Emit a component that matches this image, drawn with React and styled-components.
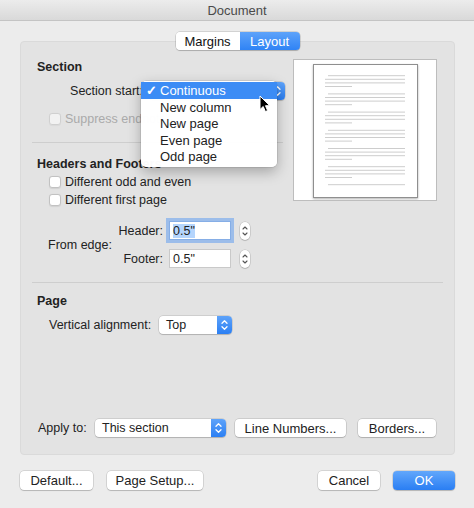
import React from 'react'
import styled, { createGlobalStyle } from 'styled-components'

const GlobalStyle = createGlobalStyle`
html, body {
    margin:0;
    padding:0;
}
body {
    width:474px;
    height:508px;
    overflow:hidden;
    background:#ececec;
    font-family:"Liberation Sans", Arial, sans-serif;
    font-size:12.5px;
    color:#222;
}
`

const sectionStarts = ['Continuous', 'New column', 'New page', 'Even page', 'Odd page']

function Chevrons({ color }) {
    return (
        <svg width="15" height="18" viewBox="0 0 15 18">
            <path d="M5 7.2 L7.5 4.7 L10 7.2" fill="none" stroke={color} strokeWidth="1.3" strokeLinecap="round" strokeLinejoin="round" />
            <path d="M5 10.8 L7.5 13.3 L10 10.8" fill="none" stroke={color} strokeWidth="1.3" strokeLinecap="round" strokeLinejoin="round" />
        </svg>
    )
}

function PopUp({ value, width, children }) {
    return (
        <PopWrap $width={width}>
            <PopText>{value}</PopText>
            <PopCap><Chevrons color="#fff" /></PopCap>
            {children}
        </PopWrap>
    )
}

function Stepper() {
    return (
        <StepBox>
            <svg width="10" height="18" viewBox="0 0 10 18">
                <path d="M3 7 L5 5 L7 7" fill="none" stroke="#555" strokeWidth="1.1" strokeLinecap="round" strokeLinejoin="round" />
                <path d="M3 11 L5 13 L7 11" fill="none" stroke="#555" strokeWidth="1.1" strokeLinecap="round" strokeLinejoin="round" />
            </svg>
        </StepBox>
    )
}

function PagePreview() {
    const groups = [0, 1, 2, 3, 4, 5]
    return (
        <Preview>
            <svg width="142" height="140" viewBox="0 0 142 140">
                <defs>
                    <filter id="pageShadow" x="-10%" y="-10%" width="120%" height="120%">
                        <feDropShadow dx="0" dy="1" stdDeviation="1" floodColor="#000" floodOpacity="0.3" />
                    </filter>
                </defs>
                <rect x="19.5" y="4.5" width="104" height="133" fill="#fff" stroke="#8f8f8f" filter="url(#pageShadow)" />
                {groups.map(g => {
                    const y = 15.7 + g * 18.2
                    return (
                        <g key={g} stroke="#cdcdcd" strokeWidth="1">
                            <line x1="34" y1={y} x2="111" y2={y} />
                            <line x1="31" y1={y + 3.6} x2="111" y2={y + 3.6} />
                            <line x1="31" y1={y + 7.2} x2="111" y2={y + 7.2} />
                            <line x1="31" y1={y + 10.8} x2="58" y2={y + 10.8} />
                        </g>
                    )
                })}
                <line x1="34" y1="124.7" x2="111" y2="124.7" stroke="#cdcdcd" strokeWidth="1" />
            </svg>
        </Preview>
    )
}

function App() {
    return (
        <Window>
            <GlobalStyle />
            <TitleBar>Document</TitleBar>
            <Body>
                <Tabs>
                    <Tab $width={64}>Margins</Tab>
                    <Tab $width={60} $active>Layout</Tab>
                </Tabs>
                <Panel>
                    <TopArea>
                        <LeftCol>
                            <Heading>Section</Heading>
                            <Row $top={7}>
                                <RightLabel $width={111}>Section start:</RightLabel>
                                <Gap $w={7} />
                                <PopUp value="Continuous" width={135}>
                                    <Menu>
                                        {sectionStarts.map((s, i) => (
                                            <MenuItem key={s} $active={i === 0}>
                                                {i === 0 && <Check>✓</Check>}
                                                {s}
                                            </MenuItem>
                                        ))}
                                    </Menu>
                                    <Cursor>
                                        <svg width="12" height="18" viewBox="0 0 12 18">
                                            <path d="M1 1 L1 14.5 L4.2 11.5 L6.4 16.6 L8.6 15.6 L6.5 10.7 L10.8 10.7 Z" fill="#000" stroke="#fff" strokeWidth="1" strokeLinejoin="round" />
                                        </svg>
                                    </Cursor>
                                </PopUp>
                            </Row>
                            <Row $top={10} $indent={17} $disabled>
                                <CheckBox $disabled />
                                <Gap $w={4} />
                                Suppress endnotes
                            </Row>
                            <Separator $top={14} />
                            <Heading $top={13}>Headers and Footers</Heading>
                            <Row $top={2} $h={16} $indent={17}>
                                <CheckBox />
                                <Gap $w={4} />
                                Different odd and even
                            </Row>
                            <Row $top={2} $h={16} $indent={17}>
                                <CheckBox />
                                <Gap $w={4} />
                                Different first page
                            </Row>
                            <FromEdge>
                                <EdgeLabel>From edge:</EdgeLabel>
                                <Fields>
                                    <FieldRow>
                                        <RightLabel $width={51}>Header:</RightLabel>
                                        <Gap $w={6} />
                                        <Field $focused><Selected>0.5"</Selected></Field>
                                        <Gap $w={9} />
                                        <Stepper />
                                    </FieldRow>
                                    <FieldRow>
                                        <RightLabel $width={51}>Footer:</RightLabel>
                                        <Gap $w={6} />
                                        <Field>0.5"</Field>
                                        <Gap $w={9} />
                                        <Stepper />
                                    </FieldRow>
                                </Fields>
                            </FromEdge>
                        </LeftCol>
                        <PagePreview />
                    </TopArea>
                    <Separator $top={14} />
                    <Heading $top={10}>Page</Heading>
                    <Row $top={7} $indent={17}>
                        <Label $width={110}>Vertical alignment:</Label>
                        <PopUp value="Top" width={73} />
                    </Row>
                    <Spacer />
                    <Row $indent={6}>
                        <Label $width={57}>Apply to:</Label>
                        <PopUp value="This section" width={131} />
                        <Gap $w={9} />
                        <Button $width={111}>Line Numbers...</Button>
                        <Gap $w={12} />
                        <Button $width={78}>Borders...</Button>
                    </Row>
                </Panel>
                <Footer>
                    <Button $width={73} $h={19}>Default...</Button>
                    <Gap $w={14} />
                    <Button $width={96} $h={19}>Page Setup...</Button>
                    <Spacer />
                    <Button $width={62} $h={19}>Cancel</Button>
                    <Gap $w={13} />
                    <Button $width={62} $h={19} $primary>OK</Button>
                </Footer>
            </Body>
        </Window>
    )
}

export default App

const Window = styled.div`
width:474px;
height:508px;
display:flex;
flex-direction:column;
background:#ececec;
`

const TitleBar = styled.div`
height:20px;
flex:none;
display:flex;
align-items:center;
justify-content:center;
background:linear-gradient(#ececec, #d9d9d9);
border-bottom:1px solid #c4c4c4;
font-size:13px;
color:#4a4a4a;
`

const Body = styled.div`
display:flex;
flex-direction:column;
align-items:center;
padding:11px 19px 0 20px;
`

const Tabs = styled.div`
position:relative;
z-index:2;
display:flex;
height:18px;
border-radius:4px;
overflow:hidden;
box-shadow:0 0 0 0.5px rgba(0,0,0,.22), 0 1px 1px rgba(0,0,0,.15);
`

const Tab = styled.div`
width:${p => p.$width}px;
display:flex;
align-items:center;
justify-content:center;
font-size:13px;
background:${p => p.$active ? 'linear-gradient(#5ea3fa, #2f83f5)' : '#fff'};
color:${p => p.$active ? '#fff' : '#111'};
`

const Panel = styled.div`
position:relative;
margin-top:-9px;
width:435px;
height:414px;
box-sizing:border-box;
display:flex;
flex-direction:column;
padding:17px 11px 17px;
background:#e3e3e3;
border:1px solid #dadada;
border-radius:4px;
`

const TopArea = styled.div`
display:grid;
grid-template-columns:251px 144px;
column-gap:10px;
align-items:start;
`

const LeftCol = styled.div`
display:flex;
flex-direction:column;
`

const Heading = styled.div`
height:16px;
line-height:16px;
margin-top:${p => p.$top || 0}px;
padding-left:5px;
font-weight:bold;
white-space:nowrap;
`

const Row = styled.div`
display:flex;
align-items:center;
height:${p => p.$h || 18}px;
margin-top:${p => p.$top || 0}px;
padding-left:${p => p.$indent || 0}px;
color:${p => p.$disabled ? '#aaa' : 'inherit'};
white-space:nowrap;
`

const Gap = styled.span`
flex:none;
width:${p => p.$w}px;
`

const Spacer = styled.div`
flex:1;
`

const Label = styled.span`
flex:none;
width:${p => p.$width}px;
white-space:nowrap;
`

const RightLabel = styled(Label)`
text-align:right;
`

const CheckBox = styled.span`
flex:none;
width:12px;
height:12px;
box-sizing:border-box;
border-radius:3px;
background:#fff;
border:1px solid #c2c2c2;
box-shadow:0 0.5px 1px rgba(0,0,0,.08);
opacity:${p => p.$disabled ? 0.55 : 1};
`

const Separator = styled.div`
height:1px;
margin-top:${p => p.$top || 0}px;
background:#cecece;
`

const PopWrap = styled.div`
position:relative;
flex:none;
display:flex;
width:${p => p.$width}px;
height:18px;
border-radius:4px;
background:#fff;
box-shadow:0 0 0 0.5px rgba(0,0,0,.18), 0 1px 1px rgba(0,0,0,.14);
`

const PopText = styled.span`
flex:1;
display:flex;
align-items:center;
padding-left:7px;
white-space:nowrap;
overflow:hidden;
`

const PopCap = styled.span`
flex:none;
width:15px;
display:flex;
border-radius:0 4px 4px 0;
background:linear-gradient(#5ea3fa, #2b7ff3);
`

const Menu = styled.div`
position:absolute;
left:-9px;
top:-1px;
z-index:5;
width:136px;
padding:1px 0 2px;
border-radius:5px;
background:rgba(255,255,255,.98);
box-shadow:0 0 0 0.5px rgba(0,0,0,.15), 0 5px 14px rgba(0,0,0,.28);
color:#222;
`

const MenuItem = styled.div`
position:relative;
height:16.5px;
line-height:17px;
padding-left:19px;
font-size:13px;
background:${p => p.$active ? '#3c8cf5' : 'transparent'};
color:${p => p.$active ? '#fff' : '#222'};
`

const Check = styled.span`
position:absolute;
left:5px;
top:0;
font-size:13px;
font-weight:bold;
`

const Cursor = styled.div`
position:absolute;
left:109px;
top:13px;
z-index:6;
line-height:0;
`

const FromEdge = styled.div`
display:flex;
align-items:center;
margin-top:13px;
padding-left:16px;
`

const EdgeLabel = styled.span`
flex:none;
width:64px;
white-space:nowrap;
`

const Fields = styled.div`
display:flex;
flex-direction:column;
gap:9px;
`

const FieldRow = styled.div`
display:flex;
align-items:center;
height:19px;
`

const Field = styled.div`
flex:none;
width:62px;
height:19px;
box-sizing:border-box;
display:flex;
align-items:center;
padding-left:3px;
background:#fff;
border:1px solid ${p => p.$focused ? '#86aee6' : '#c9c9c9'};
box-shadow:${p => p.$focused ? '0 0 0 3px rgba(98,158,240,.55)' : 'none'};
`

const Selected = styled.span`
background:#b5d5fd;
`

const StepBox = styled.div`
flex:none;
width:10px;
height:18px;
line-height:0;
border-radius:5px;
background:#fff;
box-shadow:0 0 0 0.5px rgba(0,0,0,.18), 0 1px 1px rgba(0,0,0,.12);
`

const Preview = styled.div`
width:144px;
height:142px;
box-sizing:border-box;
border:1px solid #bdbdbd;
background:#fff;
line-height:0;
`

const Button = styled.div`
flex:none;
width:${p => p.$width}px;
height:${p => p.$h || 18}px;
display:flex;
align-items:center;
justify-content:center;
border-radius:4px;
white-space:nowrap;
font-size:13px;
background:${p => p.$primary ? 'linear-gradient(#62a7fb, #2a7ef3)' : '#fff'};
color:${p => p.$primary ? '#fff' : '#222'};
box-shadow:0 0 0 0.5px rgba(0,0,0,.2), 0 1px 1px rgba(0,0,0,.14);
`

const Footer = styled.div`
display:flex;
align-items:center;
width:435px;
margin-top:16px;
`
